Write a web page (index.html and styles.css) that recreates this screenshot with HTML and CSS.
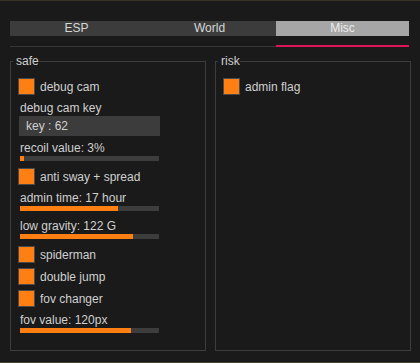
FILE: index.html
```html
<!DOCTYPE html>
<html>
<head>
<meta charset="utf-8">
<link rel="stylesheet" href="styles.css">
</head>
<body>
<div class="app">
  <div class="tabs">
    <div class="tab">ESP</div>
    <div class="tab">World</div>
    <div class="tab active">Misc</div>
  </div>
  <div class="underline">
    <div class="ul"></div>
    <div class="ul"></div>
    <div class="ul active"></div>
  </div>
  <div class="groups">
    <fieldset class="group">
      <legend>safe</legend>
      <div class="items">
        <div class="check"><span class="box"></span><span>debug cam</span></div>
        <div class="label">debug cam key</div>
        <div class="input">key : 62</div>
        <div class="label">recoil value: 3%</div>
        <div class="bar"><div class="fill" style="width:3%"></div></div>
        <div class="check"><span class="box"></span><span>anti sway + spread</span></div>
        <div class="label">admin time: 17 hour</div>
        <div class="bar"><div class="fill" style="width:70.8%"></div></div>
        <div class="label">low gravity: 122 G</div>
        <div class="bar"><div class="fill" style="width:81%"></div></div>
        <div class="check"><span class="box"></span><span>spiderman</span></div>
        <div class="check"><span class="box"></span><span>double jump</span></div>
        <div class="check"><span class="box"></span><span>fov changer</span></div>
        <div class="label">fov value: 120px</div>
        <div class="bar"><div class="fill" style="width:80%"></div></div>
      </div>
    </fieldset>
    <fieldset class="group">
      <legend>risk</legend>
      <div class="items">
        <div class="check"><span class="box"></span><span>admin flag</span></div>
      </div>
    </fieldset>
  </div>
</div>
</body>
</html>
```
FILE: styles.css
```css
* { box-sizing: border-box; }
html, body { margin: 0; padding: 0; background: #1a1a1a; }
body {
  font-family: "Liberation Sans", Arial, sans-serif;
  font-size: 12px;
  color: #d0d0d0;
}
.app {
  width: 420px;
  height: 363px;
  border-top: 1px solid #383328;
  border-bottom: 1px solid #4a4131;
  padding: 20px 11px 0 10px;
  display: flex;
  flex-direction: column;
}
.tabs {
  display: grid;
  grid-template-columns: 133px 133px 133px;
  height: 15px;
}
.tab {
  background: #3c3c3c;
  color: #d6d6d6;
  text-align: center;
  line-height: 15px;
  font-size: 12px;
}
.tab.active {
  background: #a6a6a6;
  color: #ececec;
}
.underline {
  display: grid;
  grid-template-columns: 133px 133px 133px;
  height: 2px;
  margin-top: 9px;
  align-items: end;
}
.ul { height: 1px; background: #363636; }
.ul.active { height: 2px; background: #e0145a; }
.groups {
  flex: 1;
  display: grid;
  grid-template-columns: 196px 196px;
  column-gap: 9px;
  margin-top: 7px;
  padding-bottom: 11px;
}
.group {
  margin: 0;
  border: 1px solid #3d3d3d;
  padding: 10px 7px 0 7px;
  min-width: 0;
}
.group legend {
  margin-left: -5px;
  padding: 0 0 0 3px;
  line-height: 14px;
  font-size: 12px;
  color: #d0d0d0;
}
.items {
  display: flex;
  flex-direction: column;
  align-items: flex-start;
}
.check {
  display: flex;
  align-items: center;
  height: 17px;
  margin-bottom: 5px;
  gap: 5px;
}
.box {
  width: 17px;
  height: 17px;
  background: #ff7f12;
  border: 1px solid #4a4a4a;
}
.label {
  height: 14px;
  line-height: 14px;
  margin-top: 1px;
  margin-left: 2px;
}
.input {
  margin-top: 1px;
  margin-left: 1px;
  width: 141px;
  height: 20px;
  line-height: 20px;
  background: #3c3c3c;
  padding-left: 7px;
  margin-bottom: 4px;
}
.bar {
  margin-top: 1px;
  margin-left: 2px;
  width: 139px;
  height: 5px;
  background: #3d3d3d;
  margin-bottom: 7px;
}
.fill {
  height: 100%;
  background: #ff7f12;
}
```
